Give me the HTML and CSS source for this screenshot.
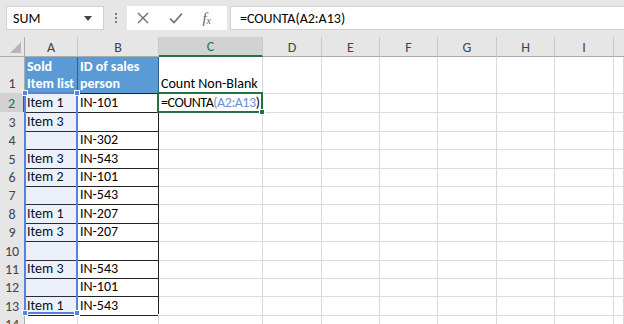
FILE: index.html
```html
<!DOCTYPE html>
<html>
<head>
<meta charset="utf-8">
<link rel="stylesheet" href="styles.css">
</head>
<body>
<div class="toolbar">
  <div class="namebox">
    <span>SUM</span>
    <svg class="dd" width="8" height="5" viewBox="0 0 8 5"><path d="M0 0H8L4 5Z" fill="#444"/></svg>
  </div>
  <div class="grip"><i></i><i></i><i></i></div>
  <div class="fbtns">
    <svg width="12" height="12" viewBox="0 0 12 12"><path d="M1 1L11 11M11 1L1 11" stroke="#6d6d6d" stroke-width="1.4" fill="none"/></svg>
    <svg width="14" height="12" viewBox="0 0 14 12"><path d="M1 6.5L5 10.5L13 1.5" stroke="#6d6d6d" stroke-width="1.6" fill="none"/></svg>
    <span class="fx">f<sub>x</sub></span>
  </div>
  <div class="fbar">=COUNTA(A2:A13)</div>
</div>

<div class="sheet">
  <div class="row hdr">
    <div class="rh corner"><span class="tri"></span></div>
    <div class="ch">A</div><div class="ch">B</div><div class="ch sel">C</div><div class="ch">D</div><div class="ch">E</div><div class="ch">F</div><div class="ch">G</div><div class="ch">H</div><div class="ch">I</div><div class="ch last"></div>
  </div>
  <div class="row r1">
    <div class="rh">1</div>
    <div class="c head">Sold<br>Item list</div><div class="c head">ID of sales<br>person</div><div class="c">Count Non-Blank</div><div class="c"></div><div class="c"></div><div class="c"></div><div class="c"></div><div class="c"></div><div class="c"></div><div class="c"></div>
  </div>
  <div class="row h19">
    <div class="rh selr">2</div>
    <div class="c a">Item 1</div><div class="c b">IN-101</div><div class="c formula"><span>=COUNTA</span><span class="par">(</span><span class="ref">A2:A13</span><span>)</span></div><div class="c"></div><div class="c"></div><div class="c"></div><div class="c"></div><div class="c"></div><div class="c"></div><div class="c"></div>
  </div>
  <div class="row h18">
    <div class="rh">3</div>
    <div class="c a">Item 3</div><div class="c b"></div><div class="c"></div><div class="c"></div><div class="c"></div><div class="c"></div><div class="c"></div><div class="c"></div><div class="c"></div><div class="c"></div>
  </div>
  <div class="row h19">
    <div class="rh">4</div>
    <div class="c a"></div><div class="c b">IN-302</div><div class="c"></div><div class="c"></div><div class="c"></div><div class="c"></div><div class="c"></div><div class="c"></div><div class="c"></div><div class="c"></div>
  </div>
  <div class="row h18">
    <div class="rh">5</div>
    <div class="c a">Item 3</div><div class="c b">IN-543</div><div class="c"></div><div class="c"></div><div class="c"></div><div class="c"></div><div class="c"></div><div class="c"></div><div class="c"></div><div class="c"></div>
  </div>
  <div class="row h18">
    <div class="rh">6</div>
    <div class="c a">Item 2</div><div class="c b">IN-101</div><div class="c"></div><div class="c"></div><div class="c"></div><div class="c"></div><div class="c"></div><div class="c"></div><div class="c"></div><div class="c"></div>
  </div>
  <div class="row h19">
    <div class="rh">7</div>
    <div class="c a"></div><div class="c b">IN-543</div><div class="c"></div><div class="c"></div><div class="c"></div><div class="c"></div><div class="c"></div><div class="c"></div><div class="c"></div><div class="c"></div>
  </div>
  <div class="row h18">
    <div class="rh">8</div>
    <div class="c a">Item 1</div><div class="c b">IN-207</div><div class="c"></div><div class="c"></div><div class="c"></div><div class="c"></div><div class="c"></div><div class="c"></div><div class="c"></div><div class="c"></div>
  </div>
  <div class="row h19">
    <div class="rh">9</div>
    <div class="c a">Item 3</div><div class="c b">IN-207</div><div class="c"></div><div class="c"></div><div class="c"></div><div class="c"></div><div class="c"></div><div class="c"></div><div class="c"></div><div class="c"></div>
  </div>
  <div class="row h18">
    <div class="rh">10</div>
    <div class="c a"></div><div class="c b"></div><div class="c"></div><div class="c"></div><div class="c"></div><div class="c"></div><div class="c"></div><div class="c"></div><div class="c"></div><div class="c"></div>
  </div>
  <div class="row h18">
    <div class="rh">11</div>
    <div class="c a">Item 3</div><div class="c b">IN-543</div><div class="c"></div><div class="c"></div><div class="c"></div><div class="c"></div><div class="c"></div><div class="c"></div><div class="c"></div><div class="c"></div>
  </div>
  <div class="row h19">
    <div class="rh">12</div>
    <div class="c a"></div><div class="c b">IN-101</div><div class="c"></div><div class="c"></div><div class="c"></div><div class="c"></div><div class="c"></div><div class="c"></div><div class="c"></div><div class="c"></div>
  </div>
  <div class="row h18">
    <div class="rh">13</div>
    <div class="c a">Item 1</div><div class="c b">IN-543</div><div class="c"></div><div class="c"></div><div class="c"></div><div class="c"></div><div class="c"></div><div class="c"></div><div class="c"></div><div class="c"></div>
  </div>
  <div class="row h19">
    <div class="rh">14</div>
    <div class="c"></div><div class="c"></div><div class="c"></div><div class="c"></div><div class="c"></div><div class="c"></div><div class="c"></div><div class="c"></div><div class="c"></div><div class="c"></div>
  </div>

  <div class="range">
    <i class="hd tl"></i><i class="hd tr"></i><i class="hd bl"></i><i class="hd br"></i>
  </div>
  <div class="active"><i class="fill"></i></div>
</div>
</body>
</html>
```

FILE: styles.css
```css
* { box-sizing: border-box; }
html, body { margin: 0; padding: 0; background: #fff; overflow: hidden; }
body {
  width: 624px; height: 324px;
  font-family: Carlito, Lato, "Liberation Sans", sans-serif;
  font-size: 14px;
  color: #000;
}

/* formula toolbar */
.toolbar {
  height: 37px;
  background: #e6e6e6;
  display: flex;
  align-items: flex-start;
  padding: 6px 0 0 6px;
}
.namebox {
  width: 98px; height: 24px;
  background: #fff;
  border: 1px solid #d0d0d0;
  display: flex; align-items: center; justify-content: space-between;
  padding: 0 11px 0 6px;
  font-size: 14px;
}
.grip {
  width: 23px; height: 24px;
  display: flex; flex-direction: column; align-items: center; justify-content: center; gap: 2px;
}
.grip i { width: 2px; height: 2px; background: #7a7a7a; display: block; }
.fbtns {
  width: 100px; height: 24px;
  background: #fff;
  display: flex; align-items: center; justify-content: space-between;
  padding: 0 16px 0 10px;
}
.fx {
  font-family: "Liberation Serif", serif;
  font-style: italic; font-size: 15px; color: #666;
  line-height: 1;
}
.fx sub { font-size: 10px; vertical-align: -1px; }
.fbar {
  flex: 1; height: 24px; margin-left: 3px;
  background: #fff;
  border: 1px solid #d0d0d0; border-right: none;
  display: flex; align-items: center;
  padding-left: 9px;
  font-size: 14px;
}

/* sheet grid */
.sheet { position: relative; }
.row {
  display: grid;
  grid-template-columns: 25px 53px 81px 104px 59px 58px 58px 59px 58px 59px 1fr;
}
.hdr { height: 20px; }
.r1 { height: 36px; }
.h19 { height: 19px; }
.h18 { height: 18px; }

.ch, .rh {
  background: #e6e6e6;
  color: #444;
  display: flex; align-items: center; justify-content: center;
  font-size: 14px;
}
.ch { border-right: 1px solid #c9c9c9; border-bottom: 1px solid #ababab; padding-top: 1px; }
.ch.sel { background: #d2d2d2; color: #217346; border-bottom: 2px solid #217346; }
.ch.last { border-right: none; }
.rh { border-right: 1px solid #ababab; border-bottom: 1px solid #c9c9c9; padding-top: 2px; }
.r1 .rh { align-items: flex-end; padding-bottom: 1px; }
.rh.selr { background: #d2d2d2; color: #217346; border-right: 2px solid #217346; }
.corner { position: relative; border-bottom: 1px solid #ababab; }
.tri {
  position: absolute; right: 3px; bottom: 3px;
  width: 0; height: 0;
  border-left: 11px solid transparent;
  border-bottom: 11px solid #b5b5b5;
}

.c {
  border-right: 1px solid #dadada;
  border-bottom: 1px solid #dadada;
  display: flex; align-items: flex-end;
  padding: 0 2px 1px 2px;
  line-height: 17px;
  white-space: nowrap;
  overflow: visible;
}
.c.formula { letter-spacing: -0.45px; }
.c.head {
  display: block;
  padding-top: 1px;
  background: #5b9bd5;
  color: #fff;
  font-weight: bold;
  border-right: 1px solid #2f5f8f;
  border-bottom: 1px solid #222;
  white-space: normal;
}
.c.a, .c.b { border-right: 1px solid #222; border-bottom: 1px solid #222; }
.par { color: #7f98c8; }
.ref { color: #6c8fdc; }

/* formula range highlight over A2:A13 */
.range {
  position: absolute;
  left: 24px; top: 55px;
  width: 54px; height: 222px;
  border: 2px solid #5384db;
  background: rgba(90, 130, 225, 0.12);
  pointer-events: none;
}
.hd {
  position: absolute; width: 6px; height: 6px;
  background: #5384db; border: 1px solid #fff;
  display: block;
}
.tl { left: -4px; top: -4px; }
.tr { right: -4px; top: -4px; }
.bl { left: -4px; bottom: -4px; }
.br { right: -4px; bottom: -4px; }

/* active cell C2 */
.active {
  position: absolute;
  left: 157px; top: 55px;
  width: 106px; height: 21px;
  border: 2px solid #217346;
}
.fill {
  position: absolute; right: -4px; bottom: -4px;
  width: 6px; height: 6px;
  background: #217346; border: 1px solid #fff;
  display: block;
}
```
